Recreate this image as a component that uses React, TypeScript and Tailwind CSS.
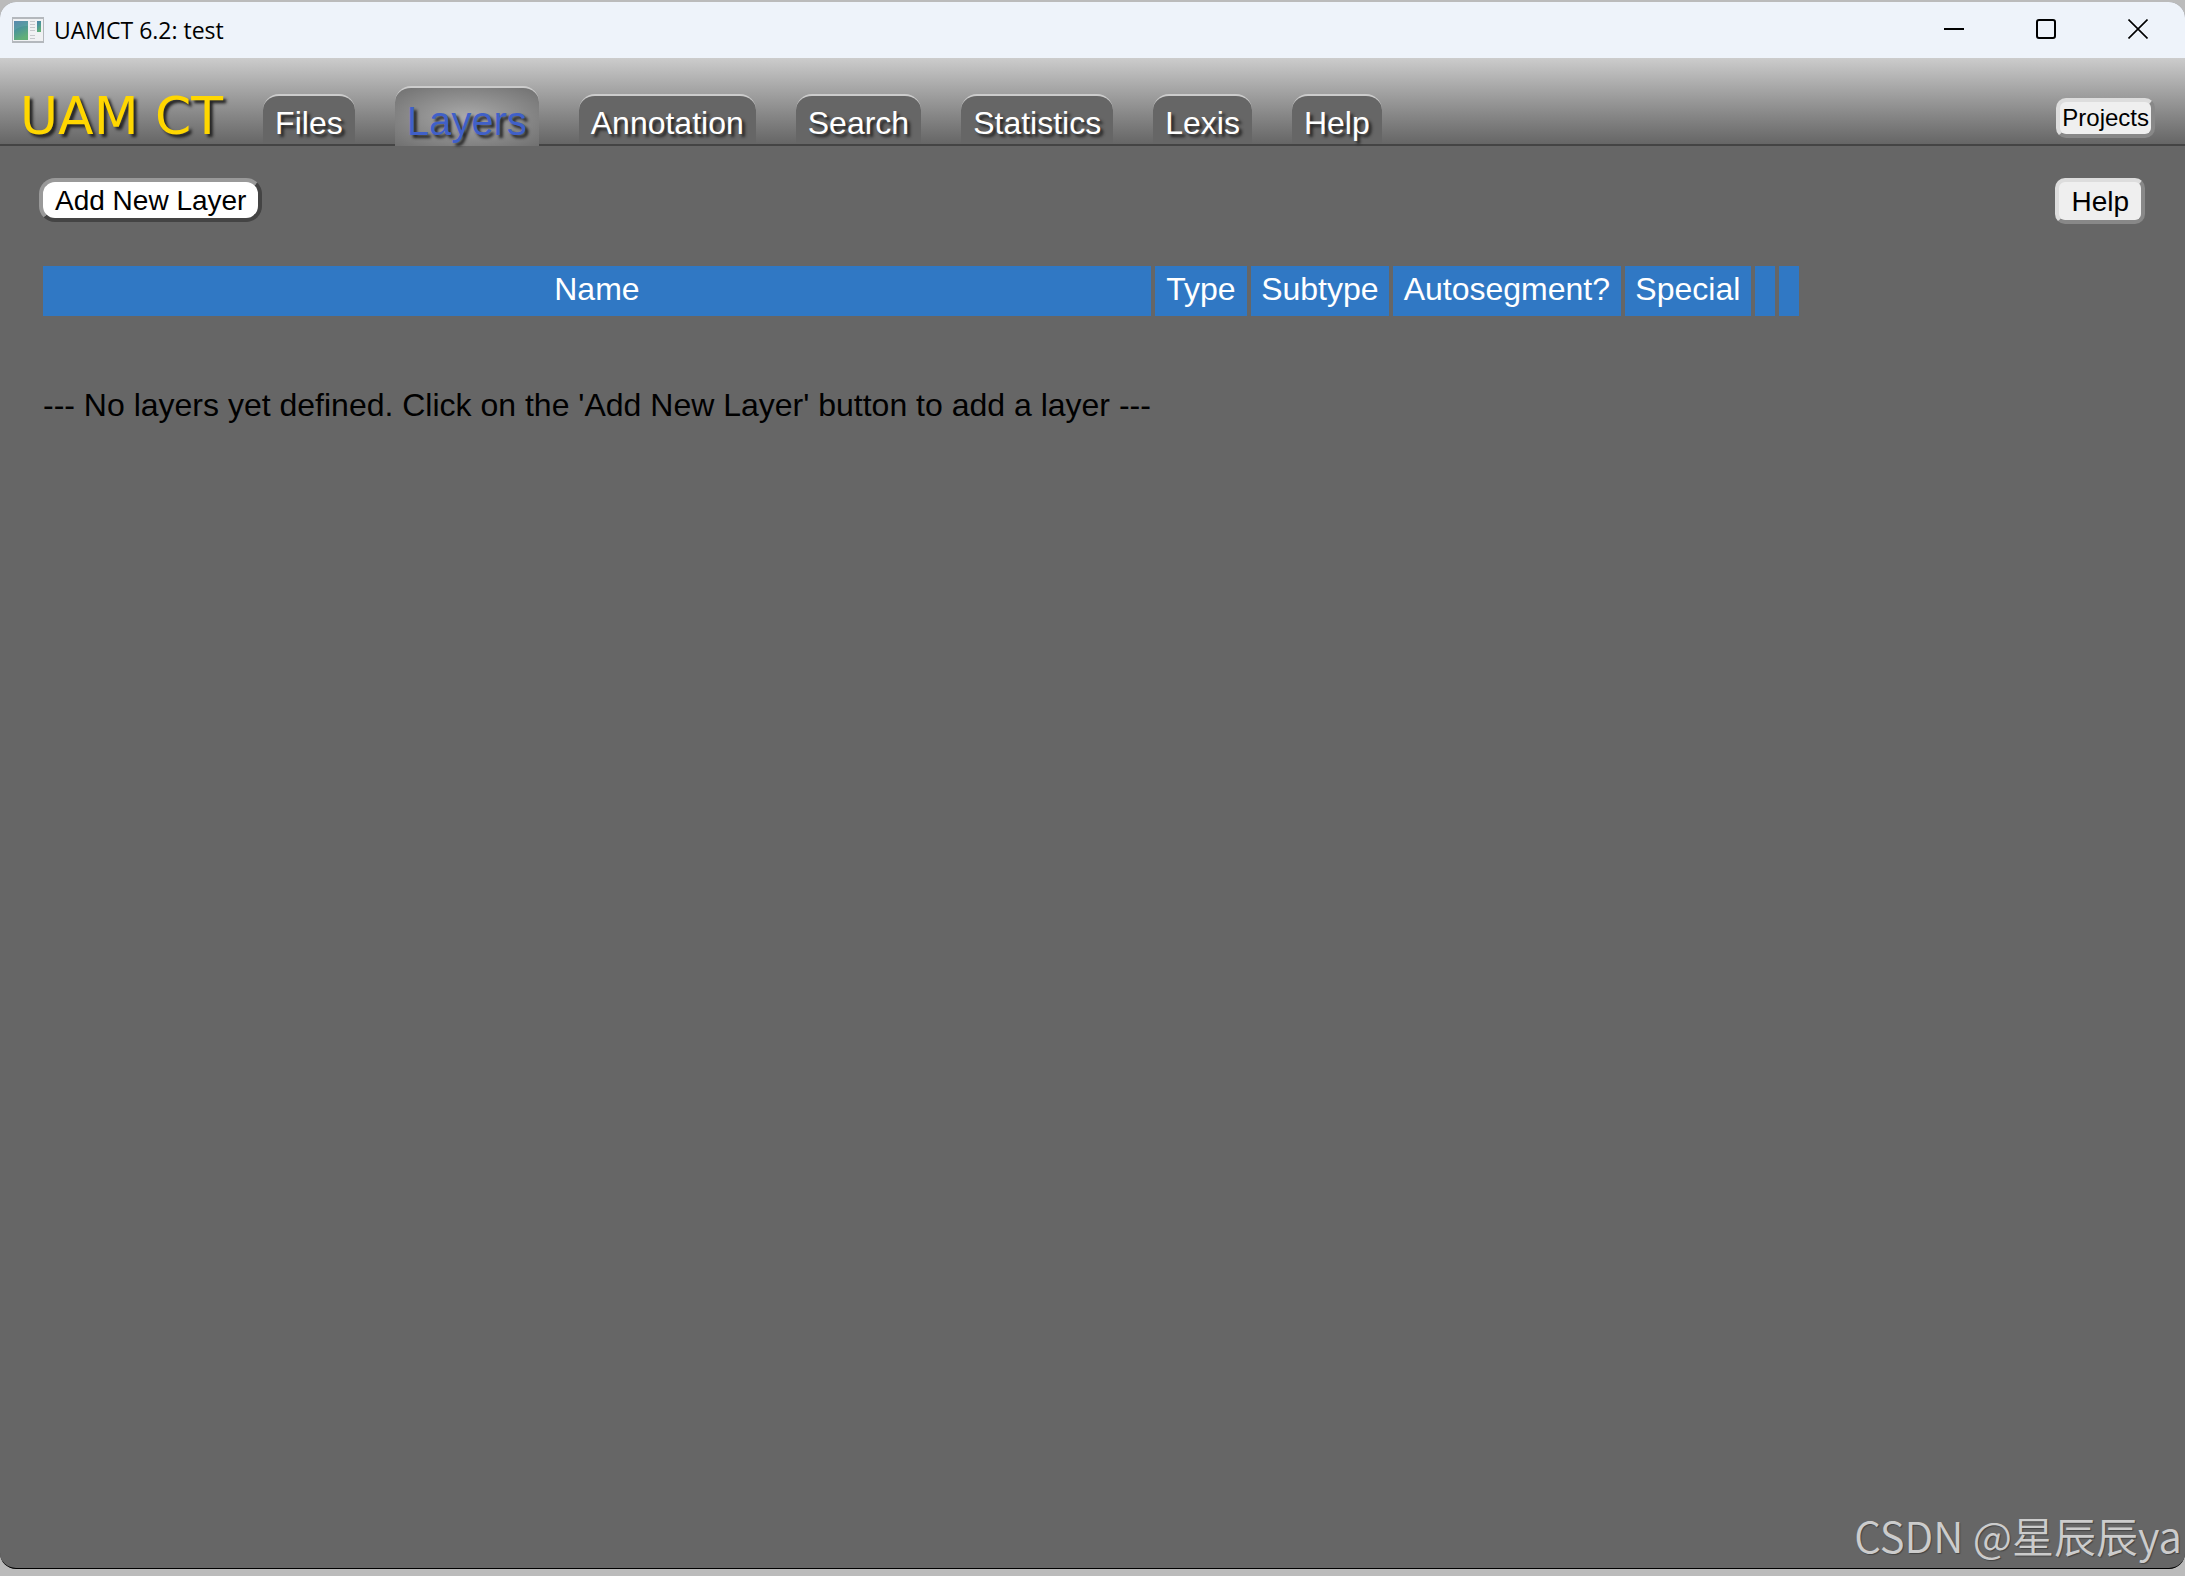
import clsx from "clsx";

const tabs = ["Files", "Layers", "Annotation", "Search", "Statistics", "Lexis", "Help"];

const columns = [
  { label: "Name", width: "" },
  { label: "Type", width: "min-w-[92px]" },
  { label: "Subtype", width: "min-w-[138px]" },
  { label: "Autosegment?", width: "min-w-[228px]" },
  { label: "Special", width: "min-w-[126px]" },
  { label: "", width: "min-w-5" },
  { label: "", width: "min-w-5" },
];

function AppIcon() {
  return (
    <svg width="32" height="26" viewBox="0 0 32 26" aria-hidden="true">
      <defs>
        <linearGradient id="pane" x1="0" y1="0" x2="0.4" y2="1">
          <stop offset="0" stopColor="#4a7fa8" />
          <stop offset="0.45" stopColor="#4a949a" />
          <stop offset="1" stopColor="#62b077" />
        </linearGradient>
      </defs>
      <rect x="0" y="0" width="32" height="26" fill="#b4b8bd" />
      <rect x="1" y="2" width="30" height="22" fill="#f0f1f3" />
      <rect x="2" y="4" width="14" height="19" fill="url(#pane)" />
      <path d="M2 14C6 10 11 9 16 9V4H2z" fill="#fff" opacity="0.08" />
      <path d="M18 4.5h5M18 7.5h5M18 10.5h5M18 13.5h5M18 18.5h5M18 21.5h5" stroke="#c6c8cc" strokeWidth="1" />
      <rect x="25" y="4" width="4" height="11" fill="url(#pane)" />
    </svg>
  );
}

function TitleBar() {
  return (
    <div className="flex h-14 items-center justify-between bg-[#eef3fa] pl-3 pr-[37px]">
      <div className="flex items-center gap-[10px]">
        <AppIcon />
        <span className="font-['Open_Sans','Noto_Sans',sans-serif] text-[23px] leading-8 text-black">
          UAMCT 6.2: test
        </span>
      </div>
      <div className="flex items-center gap-[72px] pb-[2px]">
        <button aria-label="Minimize">
          <svg width="20" height="20" viewBox="0 0 20 20" fill="none" stroke="#000" strokeWidth="2">
            <path d="M0 10h20" />
          </svg>
        </button>
        <button aria-label="Maximize">
          <svg width="20" height="20" viewBox="0 0 20 20" fill="none" stroke="#000" strokeWidth="2">
            <rect x="1" y="1" width="18" height="18" rx="2" />
          </svg>
        </button>
        <button aria-label="Close">
          <svg width="20" height="20" viewBox="0 0 20 20" fill="none" stroke="#000" strokeWidth="1.6">
            <path d="M0.5 0.5l19 19M19.5 0.5l-19 19" />
          </svg>
        </button>
      </div>
    </div>
  );
}

function NavBar({ active }: { active: string }) {
  return (
    <header className="flex h-[88px] items-end justify-between border-b-2 border-[#444] bg-linear-to-b from-[#ccc] to-[#666] pl-5 pr-[30px]">
      <div className="flex items-end gap-10">
        <h1 className="font-['DejaVu_Sans',sans-serif] text-[52px] leading-[56px] text-[#ffd700] [text-shadow:3px_3px_3px_#222]">
          UAM CT
        </h1>
        <nav className="flex items-end gap-10">
          {tabs.map((tab) => (
            <a
              key={tab}
              href="#"
              className={clsx(
                "rounded-t-[16px] border-t-2 border-[#ccc] px-3 [text-shadow:3px_3px_3px_#222]",
                tab === active
                  ? "-mb-[2px] bg-[radial-gradient(#aaa,#707070)] pt-[10px] pb-[2px] text-[40px] leading-[46px] text-[#4060c8]"
                  : "bg-[#666] pt-[9px] pb-[3px] text-[32px] leading-9 text-white",
              )}
            >
              {tab}
            </a>
          ))}
        </nav>
      </div>
      <button className="mb-[6px] rounded-[10px] border-4 border-[#ddd] border-r-[#888] border-b-[#888] bg-[#efefef] px-[2px] text-[24px] leading-8 text-black">
        Projects
      </button>
    </header>
  );
}

export default function App() {
  return (
    <div className="flex min-h-screen flex-col bg-[#bbb] pt-[2px] pb-[7px] font-['Liberation_Sans',Arial,sans-serif]">
      <div className="flex flex-1 flex-col overflow-hidden rounded-2xl border-b border-black bg-[#666]">
        <TitleBar />
        <NavBar active="Layers" />
        <main className="relative flex flex-1 flex-col pt-8 pr-10 pl-[39px]">
          <div className="flex items-start justify-between">
            <button className="rounded-[16px] border-4 border-t-[#999] border-r-[#444] border-b-[#444] border-l-[#999] bg-white px-3 pt-[2px] text-[28px] leading-[34px] text-black">
              Add New Layer
            </button>
            <button className="rounded-[10px] border-4 border-[#ddd] border-r-[#888] border-b-[#888] bg-[#efefef] px-3 pt-[2px] text-[28px] leading-9 text-black">
              Help
            </button>
          </div>
          <table className="mt-[38px] self-start border-separate border-spacing-1 text-[32px] leading-[37px]">
            <thead>
              <tr>
                {columns.map(({ label, width }, i) => (
                  <th
                    key={i}
                    className={clsx("h-[50px] bg-[#3078c4] px-[10px] pt-1 pb-2 font-normal text-white", width)}
                  >
                    {label}
                  </th>
                ))}
              </tr>
            </thead>
            <tbody>
              <tr>
                <td className="pt-[67px] text-black">
                  --- No layers yet defined. Click on the 'Add New Layer' button to add a layer ---
                </td>
              </tr>
            </tbody>
          </table>
          <span className="absolute right-[3px] bottom-[3px] font-['Noto_Sans_CJK_SC',sans-serif] text-[42px] leading-[60px] font-[350] text-[#ccc] [text-shadow:1px_1px_1px_#444]">
            CSDN @星辰辰ya
          </span>
        </main>
      </div>
    </div>
  );
}
